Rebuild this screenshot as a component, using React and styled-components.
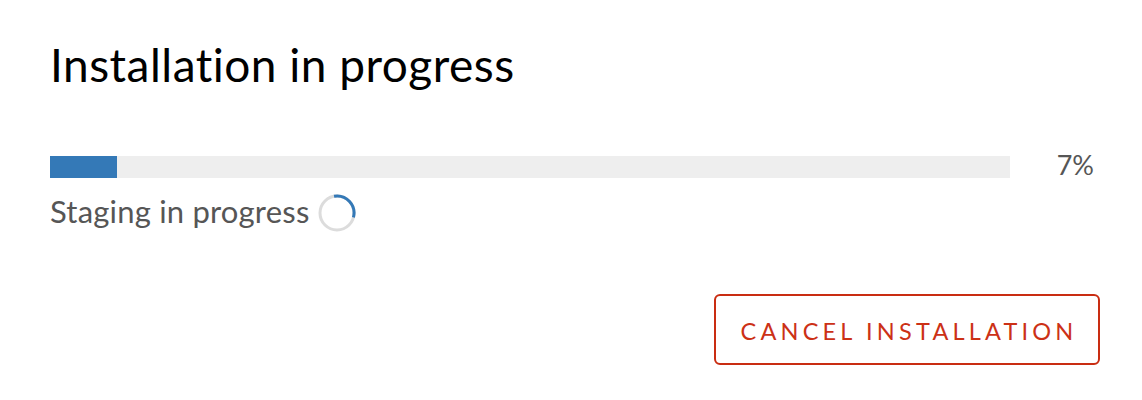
import React from "react";
import styled, { createGlobalStyle } from "styled-components";

const GlobalStyle = createGlobalStyle`
  html, body {
    margin: 0;
    padding: 0;
    background: #ffffff;
  }
  body {
    font-family: Lato, "Open Sans", sans-serif;
  }
`;

const Modal = styled.div`
  width: 1142px;
  height: 400px;
  box-sizing: border-box;
  padding: 37px 42px 0 50px;
  display: flex;
  flex-direction: column;
`;

const Title = styled.h3`
  margin: 0;
  font-size: 46px;
  font-weight: 400;
  line-height: 56px;
  color: #000000;
  letter-spacing: 0.5px;
`;

const ProgressRow = styled.div`
  display: flex;
  align-items: flex-start;
  margin-top: 63px;
`;

const Track = styled.div`
  flex: 1;
  height: 22px;
  background: #eeeeee;
  overflow: hidden;
`;

const Fill = styled.div`
  height: 100%;
  background: #3479b7;
`;

const Percent = styled.div`
  width: 84px;
  margin-top: -2px;
  padding-right: 6px;
  text-align: right;
  font-size: 27px;
  line-height: 22px;
  color: #565656;
`;

const Status = styled.div`
  display: flex;
  align-items: center;
  gap: 8px;
  margin-top: 15px;
  height: 36px;
  font-size: 31px;
  line-height: 36px;
  letter-spacing: 0.2px;
  color: #565656;
`;

const Spinner = styled.svg`
  width: 38px;
  height: 38px;
  flex: none;
  display: block;
  margin-top: 3px;
`;

const Footer = styled.div`
  display: flex;
  justify-content: flex-end;
  margin-top: 65px;
`;

const DangerButton = styled.button`
  width: 386px;
  height: 71px;
  box-sizing: border-box;
  padding: 3px 0 0 4px;
  border: 2px solid #c92d12;
  border-radius: 6px;
  background: #ffffff;
  color: #cc3116;
  font-family: Lato, "Open Sans", sans-serif;
  font-size: 23.5px;
  letter-spacing: 4.2px;
  text-transform: uppercase;
  cursor: pointer;
`;

const LoadingSpinner = () => (
  <Spinner viewBox="0 0 38 38">
    <circle cx="19" cy="19" r="17" fill="none" stroke="#dcdcdc" strokeWidth="3" />
    <path
      d="M16.05 2.26 A17 17 0 0 1 35.42 23.4"
      fill="none"
      stroke="#3479b7"
      strokeWidth="3"
    />
  </Spinner>
);

export default function App() {
  const progress = 7;
  return (
    <>
      <GlobalStyle />
      <Modal>
        <Title>Installation in progress</Title>
        <ProgressRow>
          <Track>
            <Fill style={{ width: `${progress}%` }} />
          </Track>
          <Percent>{progress}%</Percent>
        </ProgressRow>
        <Status>
          Staging in progress
          <LoadingSpinner />
        </Status>
        <Footer>
          <DangerButton>Cancel installation</DangerButton>
        </Footer>
      </Modal>
    </>
  );
}
